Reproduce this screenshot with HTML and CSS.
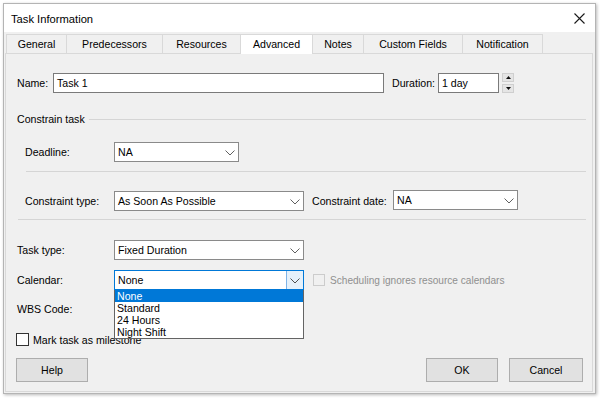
FILE: index.html
```html
<!DOCTYPE html>
<html>
<head>
<meta charset="utf-8">
<link rel="stylesheet" href="styles.css">
</head>
<body>
<div class="window">
  <div class="titlebar">
    <span class="title">Task Information</span>
    <svg class="close" width="11" height="11" viewBox="0 0 11 11"><path d="M0.5 0.5 L10.5 10.5 M10.5 0.5 L0.5 10.5" stroke="#1a1a1a" stroke-width="1.1" fill="none"/></svg>
  </div>
  <div class="client">
    <div class="tabs">
      <div class="tab w-general">General</div>
      <div class="tab w-pred">Predecessors</div>
      <div class="tab w-res">Resources</div>
      <div class="tab w-adv selected">Advanced</div>
      <div class="tab w-notes">Notes</div>
      <div class="tab w-custom">Custom Fields</div>
      <div class="tab w-notif last">Notification</div>
    </div>
    <div class="panel">
      <div class="row row-name">
        <span class="lbl lbl-name">Name:</span>
        <div class="edit w-nameinput">Task 1</div>
        <span class="lbl lbl-dur">Duration:</span>
        <div class="edit w-durinput">1 day</div>
        <div class="spin">
          <div class="spin-btn"><svg width="5" height="3" viewBox="0 0 5 3"><path d="M0 3 L2.5 0 L5 3 Z" fill="#111"/></svg></div>
          <div class="spin-btn"><svg width="5" height="3" viewBox="0 0 5 3"><path d="M0 0 L2.5 3 L5 0 Z" fill="#111"/></svg></div>
        </div>
      </div>

      <div class="group-title"><span>Constrain task</span><div class="group-line"></div></div>

      <div class="row row-deadline indent">
        <span class="lbl lbl-sub">Deadline:</span>
        <div class="combo w-small">
          <span class="combo-text">NA</span>
          <span class="combo-arrow"><svg width="10" height="6" viewBox="0 0 10 6"><path d="M0.5 0.5 L5 5 L9.5 0.5" stroke="#606060" stroke-width="1" fill="none"/></svg></span>
        </div>
      </div>
      <div class="sep sep-inner"></div>

      <div class="row row-constraint indent">
        <span class="lbl lbl-sub">Constraint type:</span>
        <div class="combo w-wide">
          <span class="combo-text">As Soon As Possible</span>
          <span class="combo-arrow"><svg width="10" height="6" viewBox="0 0 10 6"><path d="M0.5 0.5 L5 5 L9.5 0.5" stroke="#606060" stroke-width="1" fill="none"/></svg></span>
        </div>
        <span class="lbl lbl-cdate">Constraint date:</span>
        <div class="combo w-small date-combo">
          <span class="combo-text">NA</span>
          <span class="combo-arrow"><svg width="10" height="6" viewBox="0 0 10 6"><path d="M0.5 0.5 L5 5 L9.5 0.5" stroke="#606060" stroke-width="1" fill="none"/></svg></span>
        </div>
      </div>
      <div class="sep sep-outer"></div>

      <div class="row row-tasktype">
        <span class="lbl lbl-main">Task type:</span>
        <div class="combo w-wide">
          <span class="combo-text">Fixed Duration</span>
          <span class="combo-arrow"><svg width="10" height="6" viewBox="0 0 10 6"><path d="M0.5 0.5 L5 5 L9.5 0.5" stroke="#606060" stroke-width="1" fill="none"/></svg></span>
        </div>
      </div>

      <div class="row row-calendar">
        <span class="lbl lbl-main">Calendar:</span>
        <div class="combo w-wide focused">
          <span class="combo-text">None</span>
          <span class="combo-arrow hot"><svg width="10" height="6" viewBox="0 0 10 6"><path d="M0.5 0.5 L5 5 L9.5 0.5" stroke="#505050" stroke-width="1" fill="none"/></svg></span>
          <div class="droplist">
            <div class="item sel">None</div>
            <div class="item">Standard</div>
            <div class="item">24 Hours</div>
            <div class="item">Night Shift</div>
          </div>
        </div>
        <div class="check disabled"></div>
        <span class="lbl disabled-text">Scheduling ignores resource calendars</span>
      </div>

      <div class="row row-wbs">
        <span class="lbl lbl-main">WBS Code:</span>
      </div>

      <div class="row row-milestone">
        <div class="check"></div>
        <span class="lbl">Mark task as milestone</span>
      </div>

      <div class="row row-buttons">
        <div class="btn btn-help">Help</div>
        <div class="spacer"></div>
        <div class="btn btn-ok">OK</div>
        <div class="btn btn-cancel">Cancel</div>
      </div>
    </div>
  </div>
</div>
</body>
</html>
```

FILE: styles.css
```css
* { box-sizing: border-box; }

html, body {
  margin: 0;
  padding: 0;
  background: #ffffff;
}

body {
  font-family: "Liberation Sans", Arial, sans-serif;
  font-size: 10.6px;
  color: #000;
  width: 600px;
  height: 398px;
  overflow: hidden;
}

.window {
  margin: 3px 0 0 3px;
  width: 593px;
  height: 391px;
  border: 1px solid #b4b4b4;
  box-shadow: 1px 1px 3px rgba(0, 0, 0, 0.28);
  display: flex;
  flex-direction: column;
  background: #f0f0f0;
}

.titlebar {
  height: 28px;
  flex: none;
  background: #ffffff;
  display: flex;
  align-items: center;
  padding: 0 10px 0 7px;
}

.title {
  font-size: 11.2px;
  flex: 1;
  padding-top: 1px;
}

.close {
  display: block;
  margin-top: 1px;
}

.client {
  flex: 1;
  display: flex;
  flex-direction: column;
  padding: 2px 2px 1px 1px;
  background: #f0f0f0;
}

.tabs {
  display: flex;
  height: 19px;
  padding-left: 1px;
  flex: none;
  position: relative;
  z-index: 1;
}

.tab {
  height: 19px;
  border: 1px solid #d9d9d9;
  border-bottom: none;
  border-right: none;
  background: #f0f0f0;
  display: flex;
  align-items: center;
  justify-content: center;
  padding-bottom: 1px;
}

.tab.last { border-right: 1px solid #d9d9d9; }

.tab.selected {
  background: #ffffff;
  height: 20px;
}

.w-general { width: 60px; }
.w-pred { width: 96px; }
.w-res { width: 78px; }
.w-adv { width: 72px; }
.w-notes { width: 51px; }
.w-custom { width: 99px; }
.w-notif { width: 81px; }

.panel {
  flex: 1;
  border: 1px solid #d9d9d9;
  background: #f0f0f0;
  padding: 0 6px 0 11px;
  display: flex;
  flex-direction: column;
}

.row {
  display: flex;
  align-items: center;
  height: 20px;
  flex: none;
}

.indent { padding-left: 8px; }

.lbl { white-space: nowrap; }

.lbl-name { width: 36px; }
.lbl-dur { width: 46px; margin-left: 8px; }
.lbl-sub { width: 89px; }
.lbl-main { width: 97px; }
.lbl-cdate { width: 81px; margin-left: 8px; }

.edit {
  height: 20px;
  border: 1px solid #7a7a7a;
  background: #ffffff;
  padding-left: 3px;
  display: flex;
  align-items: center;
}

.w-nameinput { width: 331px; }
.w-durinput { width: 61px; }

.spin {
  margin-left: 3px;
  width: 12px;
  height: 20px;
  display: flex;
  flex-direction: column;
  justify-content: space-between;
}

.spin-btn {
  height: 9px;
  background: #e5e5e5;
  border: 1px solid #cfcfcf;
  display: flex;
  align-items: center;
  justify-content: center;
}

.spin-btn svg { display: block; }

.row-name { margin-top: 19px; }

.group-title {
  margin-top: 19px;
  height: 14px;
  display: flex;
  align-items: center;
  flex: none;
}

.group-line {
  flex: 1;
  height: 1px;
  background: #d5d5d5;
  margin-left: 4px;
}

.row-deadline { margin-top: 16px; }

.sep {
  height: 1px;
  background: #d5d5d5;
  flex: none;
}

.sep-inner { margin-top: 9px; margin-left: 9px; }
.row-constraint { margin-top: 19px; }
.sep-outer { margin-top: 8px; margin-left: 1px; }
.row-tasktype { margin-top: 20px; }
.row-calendar { margin-top: 10px; }
.row-wbs { margin-top: 9px; }
.row-milestone { margin-top: 14px; height: 13px; }
.row-buttons { margin-top: 12px; height: 24px; }

.combo {
  height: 20px;
  border: 1px solid #8a8a8a;
  background: #ffffff;
  display: flex;
  align-items: stretch;
  position: relative;
}

.w-small { width: 125px; }
.w-wide { width: 190px; }
.date-combo { margin-top: -2px; }

.combo-text {
  flex: 1;
  padding-left: 3px;
  display: flex;
  align-items: center;
}

.combo-arrow {
  width: 17px;
  display: flex;
  align-items: center;
  justify-content: center;
  padding-top: 1px;
}

.combo-arrow svg { display: block; }

.combo.focused { border-color: #0078d7; }

.combo-arrow.hot {
  background: #e5f1fb;
  border-left: 1px solid #7fb4e8;
}

.droplist {
  position: absolute;
  left: -1px;
  right: -1px;
  top: 19px;
  border: 1px solid #646464;
  border-top: none;
  background: #ffffff;
  z-index: 5;
}

.item {
  height: 12px;
  line-height: 12px;
  padding-left: 2px;
}

.item.sel {
  background: #0078d7;
  color: #ffffff;
}

.check {
  width: 13px;
  height: 13px;
  border: 1px solid #333333;
  background: #ffffff;
  flex: none;
  margin-left: -1px;
  margin-right: 4px;
}

.check.disabled {
  width: 12px;
  height: 12px;
  border-color: #cccccc;
  background: #f0f0f0;
  margin-left: 9px;
  margin-right: 5px;
}

.disabled-text { color: #8f8f8f; font-size: 10.1px; }

.spacer { flex: 1; }

.btn {
  height: 24px;
  background: #e1e1e1;
  border: 1px solid #adadad;
  display: flex;
  align-items: center;
  justify-content: center;
}

.btn-help { width: 72px; margin-left: -1px; }
.btn-ok { width: 72px; }
.btn-cancel { width: 74px; margin-left: 11px; margin-right: 3px; }
```
